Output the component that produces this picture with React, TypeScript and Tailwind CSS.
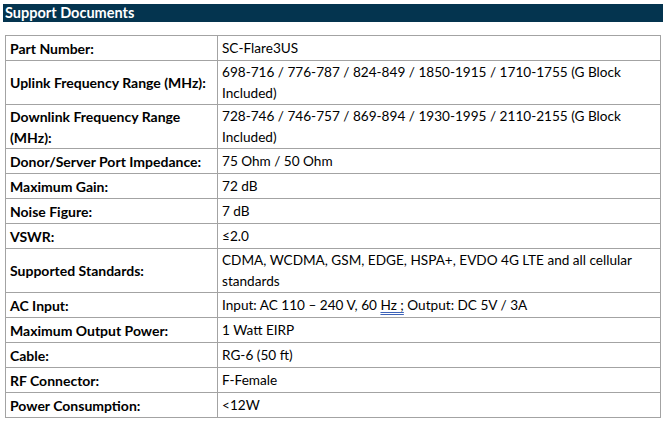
const rows: { label: string; value: React.ReactNode; tall?: boolean }[] = [
  { label: 'Part Number:', value: 'SC-Flare3US' },
  {
    label: 'Uplink Frequency Range (MHz):',
    value: '698-716 / 776-787 / 824-849 / 1850-1915 / 1710-1755 (G Block Included)',
    tall: true,
  },
  {
    label: 'Downlink Frequency Range (MHz):',
    value: '728-746 / 746-757 / 869-894 / 1930-1995 / 2110-2155 (G Block Included)',
    tall: true,
  },
  { label: 'Donor/Server Port Impedance:', value: '75 Ohm / 50 Ohm' },
  { label: 'Maximum Gain:', value: '72 dB' },
  { label: 'Noise Figure:', value: '7 dB' },
  { label: 'VSWR:', value: '≤2.0' },
  {
    label: 'Supported Standards:',
    value: 'CDMA, WCDMA, GSM, EDGE, HSPA+, EVDO 4G LTE and all cellular standards',
    tall: true,
  },
  {
    label: 'AC Input:',
    value: (
      <>
        Input: AC 110 – 240 V, 60{' '}
        <span className="underline decoration-double decoration-[#3c62b8] underline-offset-2">Hz ;</span>{' '}
        Output: DC 5V / 3A
      </>
    ),
  },
  { label: 'Maximum Output Power:', value: '1 Watt EIRP' },
  { label: 'Cable:', value: 'RG-6 (50 ft)' },
  { label: 'RF Connector:', value: 'F-Female' },
  { label: 'Power Consumption:', value: '<12W' },
]

export default function App() {
  return (
    <div
      className="h-[431px] w-[669px] bg-white text-[14px] text-black"
      style={{ fontFamily: 'Lato, "Open Sans", sans-serif' }}
    >
      <div className="pl-[3px] pt-[4px]">
        <div className="flex h-[18px] w-[660px] items-center bg-[#04344f] pl-[2px] text-[14.5px] font-bold leading-none text-white">
          Support Documents
        </div>
      </div>
      <div className="pl-[5px] pt-[13px]">
        <table className="w-[656px] border-collapse">
          <tbody>
            {rows.map((r) => (
              <tr key={r.label} className={r.tall ? 'h-[44px]' : 'h-[25px]'}>
                <td className="w-[212px] border border-[#a3a3a3] px-[4px] py-0 align-middle font-bold leading-[21px]">
                  {r.label}
                </td>
                <td className="border border-[#a3a3a3] px-[4px] py-0 align-middle text-[13.6px] leading-[21px]">
                  {r.value}
                </td>
              </tr>
            ))}
          </tbody>
        </table>
      </div>
    </div>
  )
}
